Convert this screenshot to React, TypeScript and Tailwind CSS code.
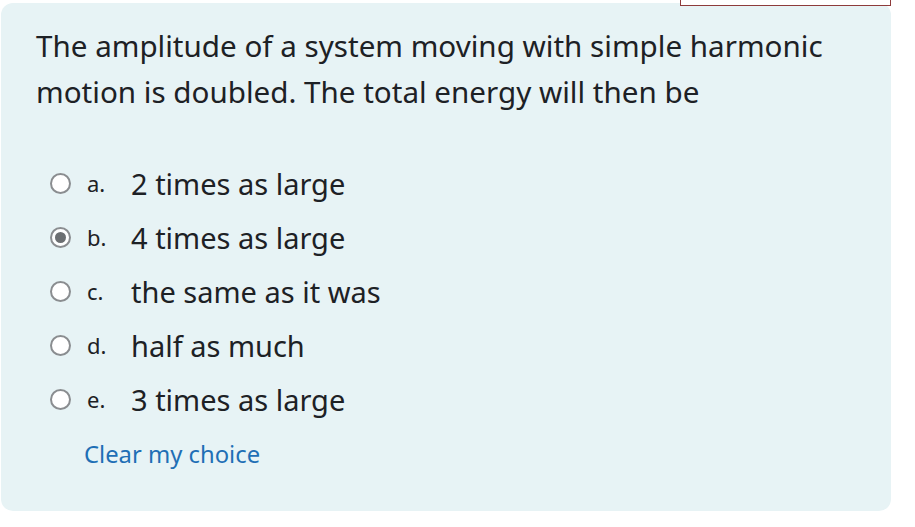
import React from 'react';

const options = [
  { key: 'a.', text: '2 times as large', checked: false },
  { key: 'b.', text: '4 times as large', checked: true },
  { key: 'c.', text: 'the same as it was', checked: false },
  { key: 'd.', text: 'half as much', checked: false },
  { key: 'e.', text: '3 times as large', checked: false },
];

function Radio({ checked }: { checked: boolean }) {
  return (
    <div className="flex h-[21px] w-[21px] shrink-0 items-center justify-center rounded-full border-[2px] border-[#8a8d90] bg-white">
      {checked && <div className="h-[11px] w-[11px] rounded-full bg-[#6c6f72]" />}
    </div>
  );
}

export default function App() {
  return (
    <div className="relative h-[527px] w-[915px] bg-white font-['Noto_Sans',sans-serif] text-[#1d2125]">
      {/* info box peeking at the top */}
      <div className="absolute right-[24px] top-[-10px] h-[13px] w-[211px] border border-[#8e3b3b] bg-white" />

      <div className="ml-[1px] mt-[3px] h-[508px] w-[890px] rounded-[12px] bg-[#e7f3f5] pl-[35px] pt-[20px]">
        <p className="text-[29.6px] leading-[46px]">
          The amplitude of a system moving with simple harmonic
          <br />
          motion is doubled. The total energy will then be
        </p>

        <div className="mt-[41px] flex flex-col">
          {options.map((o) => (
            <div key={o.key} className="flex h-[54px] items-center">
              <div className="ml-[14px]">
                <Radio checked={o.checked} />
              </div>
              <span className="ml-[16px] w-[44px] text-[22px] leading-none">{o.key}</span>
              <span className="text-[29px] leading-none">{o.text}</span>
            </div>
          ))}
        </div>

        <div className="ml-[48px] mt-[17px] text-[23.8px] leading-none text-[#1f6fb5]">Clear my choice</div>
      </div>
    </div>
  );
}
